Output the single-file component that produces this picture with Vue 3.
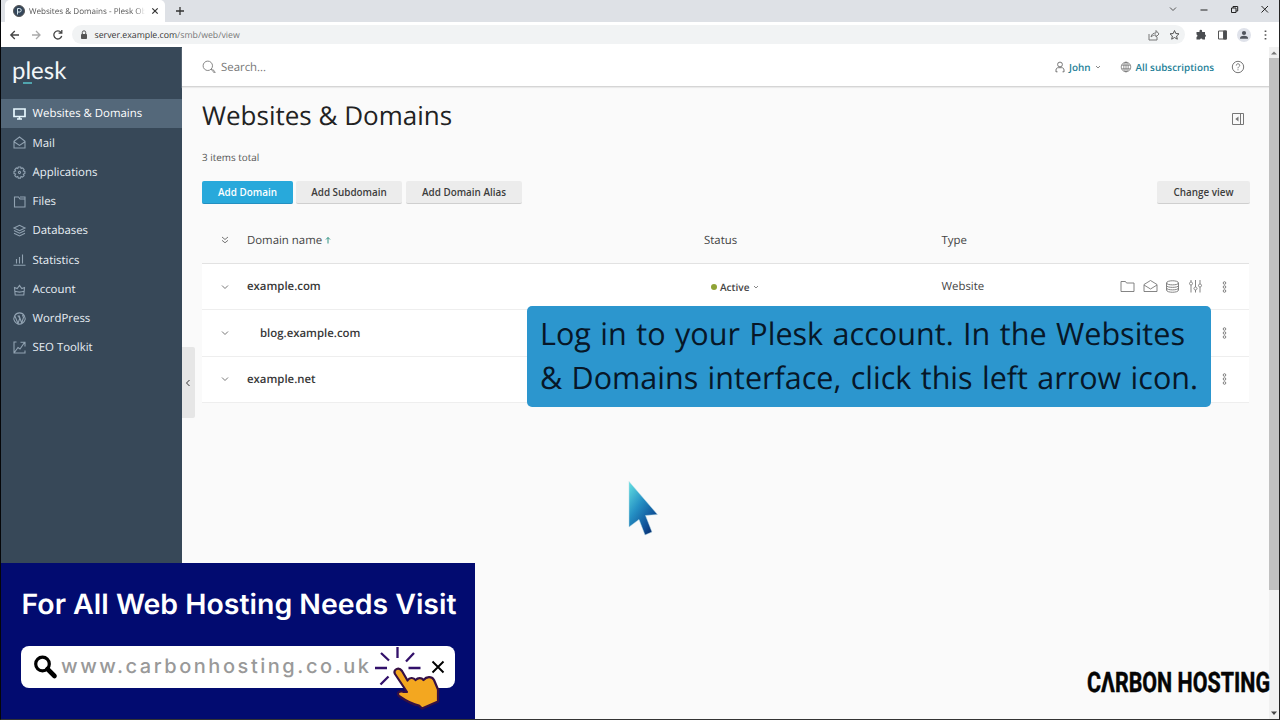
<script setup>
const nav = [
  { label: 'Websites & Domains', d: 'M1 2h11v7.5H1zM4 12h5M6.5 9.5V12', active: true },
  { label: 'Mail', d: 'M1 5.2 6.5 1 12 5.2V12H1zM1 5.8l5.5 3.6L12 5.8' },
  { label: 'Applications', d: 'M5.3 1h2.4l.4 1.5 1.6-.5 1.4 1.6-.8 1.3 1.6.6v2l-1.6.7.8 1.4-1.6 1.5-1.5-.6-.5 1.6H5.3l-.5-1.6-1.5.6-1.5-1.5.8-1.5L1 7.5v-2l1.6-.6-.8-1.3L3.3 2l1.5.5zM6.5 5.4a1.1 1.1 0 1 0 .01 0z' },
  { label: 'Files', d: 'M1.5 2h4l1.5 2h5v8H1.5zM7 2h5v2' },
  { label: 'Databases', d: 'M1 4 6.5 1.3 12 4 6.5 6.7zM1 6.5l5.5 2.7L12 6.5M1 9.2l5.5 2.7L12 9.2' },
  { label: 'Statistics', d: 'M.5 12.2h12M3.5 10.500V6M6.500 10.500V4M9.500 10.500V1.500' },
  { label: 'Account', d: 'M1.500 4.500 4.200 5.500 6.500 2.500l2.300 3 2.700-1-.700 7.500H2.200zM1.800 8.300c3 1 6.500 1 9.400 0' },
  { label: 'WordPress', d: 'M6.500.900a5.600 5.600 0 1 0 .01 0zM2 4.200l3 7.300 1.700-5L5.500 4M4.500 4h2.200M6.200 4l2.500 7L10.500 5.500 9.500 3' },
  { label: 'SEO Toolkit', d: 'M3.500 1H1v11h11V9.500M1 12l4-5.500L7 8l4.500-6.500M7.500 1.300H12V5.500' },
]
const rows = [
  { name: 'example.com', full: true },
  { name: 'blog.example.com', sub: true },
  { name: 'example.net' },
]
const tools = [
  'M1 2.500h4.500L6.500 4H14v8.500H1z',
  'M1 5.500 7.500 1.500 14 5.500v7H1zM1 6l6.500 4L14 6',
  'M1.500 4c0-3 12-3 12 0v7c0 3-12 3-12 0zM1.500 4c0 2.500 12 2.500 12 0M1.500 6.500c0 2.500 12 2.500 12 0M1.500 9c0 2.500 12 2.500 12 0',
  'M3 1v2M3 6v7.500M7.500 1v7M7.500 11v2.500M12 1v4M12 8v5.500M3 3a1.500 1.500 0 1 0 .01 0zM7.500 8a1.500 1.500 0 1 0 .01 0zM12 5a1.500 1.500 0 1 0 .01 0z',
]
</script>

<template>
  <div class="screen">
    <header class="tabs">
      <div class="tab">
        <svg class="fav" viewBox="0 0 12 12"><circle cx="6" cy="6" r="5.500" fill="#34465a" /><path d="M4.500 9.500v-6h2a1.700 1.700 0 0 1 0 3.500h-2" fill="none" stroke="#d5e6ee" /></svg>
        <span class="tabtitle">Websites &amp; Domains - Plesk Obs</span>
        <svg class="x" viewBox="0 0 8 8"><path d="m1.300 1.300 5.400 5.400M6.700 1.300 1.300 6.700" /></svg>
      </div>
      <svg class="plus" viewBox="0 0 10 10"><path d="M5 1v8M1 5h8" /></svg>
      <svg class="wincontrols" viewBox="0 0 106 14">
        <path d="m4 5.500 3 3 3-3" />
        <path d="M34.500 8h7" stroke="#222" />
        <path d="M65.500 6h4.500v4.500h-4.500zM67 6V4.500h4.700V9H70" stroke="#222" />
        <path d="m95.500 4 6.500 6.500M102 4l-6.500 6.500" stroke="#222" />
      </svg>
    </header>
    <div class="toolbar">
      <svg class="navigate" viewBox="0 0 56 14">
        <path d="M10 7H2M5.800 3 1.800 7l4 4" />
        <path d="M23 7h8M27 3l4 4-4 4" stroke="#aaa" />
        <path d="M52 4.500A4 4 0 1 0 52.700 8M52.800 2v3.200h-3.200" />
      </svg>
      <div class="url">
        <svg class="lock" viewBox="0 0 8 10"><path d="M1.500 4.500h5v4h-5z" fill="#555" stroke="#555" /><path d="M2.300 4V2.500a1.700 1.700 0 0 1 3.400 0V4" /></svg>
        <span class="host">server.example.com<i>/smb/web/view</i></span>
        <svg class="urlicons" viewBox="0 0 36 14">
          <path d="M2 6v6h8V9M4 9c.5-3 2.500-4 5-4V2.500L12 6 9 9V7C7 7 5.500 7.500 4 9z" stroke="#777" />
          <path d="m27.500 2.500 1.300 3 3.200.300-2.400 2.200.700 3.200-2.800-1.700-2.800 1.700.700-3.200L23 5.800l3.200-.300z" />
        </svg>
      </div>
      <svg class="ext" viewBox="0 0 84 14">
        <path d="M5.500 4V3a1.300 1.300 0 0 1 2.600 0v1H11v2.500a1.300 1.300 0 0 1 0 2.500v2.500H8.500a1.300 1.300 0 0 0-2.500 0H2.500V9a1.300 1.300 0 0 0 0-2.500V4z" fill="#4a4d51" stroke="none" />
        <path d="M24.500 3h8v8h-8z" /><path d="M29.500 3h3v8h-3z" fill="#4a4d51" />
        <g stroke="none"><circle cx="50" cy="7" r="7" fill="#dfe2ea" /><circle cx="50" cy="5" r="2.100" fill="#50545d" /><path d="M46 10.800V9.800c0-2.800 8-2.800 8 0v1z" fill="#50545d" /></g>
        <path d="M71.500 2.500v1.600M71.500 6.200v1.600M71.500 9.900v1.600" stroke-width="1.700" />
      </svg>
    </div>

    <div class="body">
      <aside class="side">
        <div class="logo"><span>plesk</span></div>
        <nav>
          <a v-for="n in nav" :key="n.label" :class="{ active: n.active }">
            <svg viewBox="0 0 13 13"><path :d="n.d" /></svg><span>{{ n.label }}</span>
          </a>
        </nav>
      </aside>

      <div class="content">
        <div class="topbar">
          <svg class="search" viewBox="0 0 14 14"><circle cx="5.800" cy="5.800" r="4.700" /><path d="m9 9 1 1M10 10.200l.700-.700 2.600 2.500-.900 1z" /></svg>
          <span class="ph">Search...</span>
          <svg class="user" viewBox="0 0 10 12"><circle cx="5" cy="3.500" r="2.400" /><path d="M1 11V9c0-1.500 1-2.300 2.200-2.300h3.600C8 6.700 9 7.500 9 9v2M1 10.800h1.500M7.500 10.800H9" /></svg>
          <b class="john">John</b>
          <svg class="caret" viewBox="0 0 6 6"><path d="m1 2 2 2 2-2" /></svg>
          <svg class="globe" viewBox="0 0 12 12"><circle cx="6" cy="6" r="4.800" /><ellipse cx="6" cy="6" rx="2.200" ry="4.800" /><path d="M6 1v10M1.700 4.200h8.600M1.700 7.800h8.600" /></svg>
          <b class="subs">All subscriptions</b>
          <svg class="help" viewBox="0 0 14 14"><circle cx="7" cy="7" r="5.700" /><path d="M5.300 5.500c0-2.400 3.500-2.200 3.400 0C8.600 6.700 7 6.700 7 8.300M7 9.300v1" /></svg>
        </div>
        <main>
          <div class="heading">
            <h1>Websites &amp; Domains</h1>
            <svg viewBox="0 0 12 12"><path d="M.500.500h11v11H.500zM8.500.500v11" /><path d="M6.500 3.500v5L3.300 6z" fill="#777" stroke="none" /></svg>
          </div>
          <p class="total">3 items total</p>
          <div class="buttons">
            <button class="primary">Add Domain</button>
            <button class="sub">Add Subdomain</button>
            <button class="alias">Add Domain Alias</button>
            <button class="view">Change view</button>
          </div>
          <div class="table">
            <div class="row head">
              <svg class="chev" viewBox="0 0 8 8"><path d="m1 1 3 2.500L7 1M1 4.300l3 2.500 3-2.500" /></svg>
              <span class="cell">Domain name <svg class="up" viewBox="0 0 6 8"><path d="M3 7.500V1.500M1 3.500l2-2 2 2" /></svg></span>
              <span class="cell">Status</span><span class="cell">Type</span>
            </div>
            <div v-for="r in rows" :key="r.name" class="row">
              <svg class="chev" viewBox="0 0 8 8"><path d="m1 2.500 3 3 3-3" /></svg>
              <b class="cell" :class="{ child: r.sub }">{{ r.name }}</b>
              <span class="status"><template v-if="r.full"><i class="dot"></i>Active<svg class="caret" viewBox="0 0 6 6"><path d="m1 2 2 2 2-2" /></svg></template></span>
              <span class="cell">{{ r.full ? 'Website' : '' }}</span>
              <span class="tools"><template v-if="r.full"><svg v-for="t in tools" :key="t" viewBox="0 0 15 15"><path :d="t" /></svg></template></span>
              <svg class="more" viewBox="0 0 5 12"><circle cx="2.500" cy="2" r="1.300" /><circle cx="2.500" cy="6" r="1.300" /><circle cx="2.500" cy="10" r="1.300" /></svg>
            </div>
          </div>
        </main>
      </div>
      <div class="scroll"><svg viewBox="0 0 10 10"><path d="m2 7 3-3 3 3z" /></svg><div class="thumb"></div><svg class="down" viewBox="0 0 10 10"><path d="m2 3 3 3.500L8 3z" /></svg></div>
    </div>

    <div class="handle"><svg viewBox="0 0 6 8"><path d="M4.500 1 1.500 4l3 3" /></svg></div>

    <div class="callout">
      <svg viewBox="0 0 684 101">
        <text x="13" y="38.500" textLength="645" lengthAdjust="spacingAndGlyphs">Log in to your Plesk account. In the Websites</text>
        <text x="13" y="82.500" textLength="658" lengthAdjust="spacingAndGlyphs">&amp; Domains interface, click this left arrow icon.</text>
      </svg>
    </div>

    <svg class="cursor" viewBox="0 0 36 60">
      <defs><linearGradient id="cg" x1="0" y1="0" x2="0.750" y2="1"><stop offset="0" stop-color="#64e2e2" /><stop offset=".45" stop-color="#2590c4" /><stop offset=".8" stop-color="#10549a" /><stop offset="1" stop-color="#082f70" /></linearGradient></defs>
      <path d="M4 1.500 32.500 34.500 20.500 35.500 27 52 20 55 14 39.500 4 47z" fill="url(#cg)" stroke="#b9dce6" stroke-width=".5" />
    </svg>

    <section class="promo">
      <svg class="promotitle" viewBox="0 0 474 60"><text x="20.500" y="31" textLength="435" lengthAdjust="spacingAndGlyphs">For All Web Hosting Needs Visit</text></svg>
      <div class="promobar">
        <svg viewBox="0 0 434 42">
          <circle cx="21.500" cy="18" r="6.800" fill="none" stroke="#000" stroke-width="3.200" /><path d="m26.500 23 7 7" stroke="#000" stroke-width="4.600" stroke-linecap="round" />
          <text x="40" y="27" textLength="308">www.carbonhosting.co.uk</text>
          <path d="m411.500 15.500 11 11M422.500 15.500l-11 11" stroke="#000" stroke-width="1.900" />
        </svg>
      </div>
      <svg class="hand" viewBox="0 0 86 70">
        <path d="M27.500 3v11M11 9l8 7.500M44 9l-8 8.500M5 24h12M38.500 24h12M18.500 32.500l-8 8" fill="none" stroke="#32106a" stroke-width="2.300" />
        <path d="M25 30c-2-4 3.500-8 7-3l5.500 9.500c2-3 6-3.500 8-.500 2.500-2.500 6-2.500 8 0 3-3.500 8-4 10.500 0l4 9.500v12L52 64.500 49 61.500c-7-1-13.500-5-20-9.500-3-3.500 1-5.500 5-4h3z" fill="#f3a720" stroke="#351044" stroke-width="2.200" stroke-linejoin="round" />
      </svg>
    </section>

    <svg class="brand" viewBox="0 0 190 30"><text x="6" y="19.700" transform="scale(1 1.167)" textLength="183" lengthAdjust="spacingAndGlyphs">C&#923;RBON HOSTING</text></svg>
  </div>
</template>

<style>
body { margin: 0; overflow: hidden; }
</style>
<style scoped>
* { box-sizing: border-box; }
svg { display: block; fill: none; stroke: #555; stroke-width: 1; flex: none; overflow: visible; }
svg text { stroke: none; }
.screen { position: relative; width: 1280px; height: 720px; overflow: hidden; border-left: 1px solid #050608; border-right: 1px solid #222; border-bottom: 1px solid #333; font: 11.400px/16px "Open Sans", "Noto Sans", sans-serif; text-rendering: geometricPrecision; color: #444; background: #fafafa; display: flex; flex-direction: column; }
.tabs { height: 22px; flex: none; background: #dee1e6; display: flex; align-items: center; padding-left: 4px; }
.tab { width: 160px; height: 22px; background: #fff; border-radius: 5px 5px 0 0; display: flex; align-items: center; padding-left: 8px; }
.fav { width: 12px; height: 12px; margin-right: 4px; }
.tabtitle { width: 116px; white-space: nowrap; font-size: 8.100px; padding-top: 1px; color: #555; -webkit-mask-image: linear-gradient(90deg, #000 92%, transparent); mask-image: linear-gradient(90deg, #000 92%, transparent); }
.x { width: 8px; height: 8px; margin-left: 6px; stroke: #333; stroke-width: 1.200; }
.plus { width: 10px; height: 10px; margin-left: 10px; stroke: #333; stroke-width: 1.300; }
.wincontrols { width: 106px; height: 14px; margin: -4px 7px 0 auto; }
.toolbar { height: 25px; flex: none; background: #fff; display: flex; align-items: center; padding-left: 8px; }
.navigate { width: 56px; height: 14px; stroke: #444; stroke-width: 1.300; }
.url { width: 1113px; height: 19px; border-radius: 10px; background: #f1f3f4; margin-left: 7px; display: flex; align-items: center; padding-left: 8px; }
.lock { width: 8px; height: 10px; margin-right: 6.500px; }
.host { font-size: 8.750px; color: #333; }
.host i { font-style: normal; color: #777; }
.urlicons { width: 36px; height: 14px; margin: 0 2px 0 auto; }
.ext { width: 84px; height: 14px; margin-left: 9px; }
.body { flex: 1; min-height: 0; display: flex; }
.side { width: 181px; flex: none; background: #374858; color: #e7eef4; font-weight: 500; }
.logo { height: 52px; padding: 9.500px 0 0 11px; font: 24px/28px Lato, sans-serif; color: #f2f6f8; position: relative; }
.logo::after { content: ""; position: absolute; left: 22px; top: 35px; width: 9px; height: 2px; background: #50a5ae; }
nav a { display: flex; align-items: center; height: 29.250px; padding: 0 0 0 12px; }
nav span { padding-top: 1.500px; }
nav svg { width: 13px; height: 13px; margin-right: 6.500px; stroke: #91a2b1; stroke-width: 1.100; }
nav .active { background: #54687a; color: #fff; }
nav .active svg { stroke: #e8f8ff; stroke-width: 1.700; }
.content { flex: 1; min-width: 0; display: flex; flex-direction: column; }
.topbar { height: 40px; flex: none; background: #fff; border-bottom: 1px solid #d5d5d5; box-shadow: 0 1px 1px #eaeaea; display: flex; align-items: center; padding: 0 24px 0 19.500px; }
.search { width: 14px; height: 14px; stroke: #888; }
.ph { margin: 0 auto 0 5.500px; padding-top: 2px; color: #777; }
.topbar b { font-size: 9.900px; font-weight: 600; color: #247f98; }
.user { width: 10px; height: 12px; margin-right: 4px; stroke: #777; }
.caret { width: 6px; height: 6px; margin-left: 4px; stroke: #888; }
.globe { width: 12px; height: 12px; margin: 0 4px 0 19px; stroke: #777; stroke-width: .800; }
.help { width: 14px; height: 14px; margin-left: 17px; stroke: #777; }
main { padding: 0 20px; }
.heading { display: flex; justify-content: space-between; align-items: center; padding: 12px 5px 0 0; height: 51px; }
.heading svg { width: 12px; height: 12px; stroke: #777; margin-top: 1px; }
h1 { margin: -7px 0 0; font-size: 26px; line-height: 34px; font-weight: 400; color: #222; }
.total { margin: 11px 0 16px; font-size: 9.900px; color: #555; }
.buttons { display: flex; height: 24px; }
button { height: 23px; padding: 0; border: 0; border-bottom: 1px solid #cfcfcf; border-radius: 2px; background: #ececec; font: 600 9.900px/21px "Open Sans", sans-serif; color: #3c3c3c; text-align: center; white-space: nowrap; margin-right: 4px; width: 106px; }
.primary { width: 91px; background: #28a9db; border-color: #238fc0; color: #fff; margin-right: 3px; }
.alias { width: 116px; }
.view { width: 93px; margin: 0 -1px 0 auto; }
.table { margin-top: 12px; }
.row { height: 46.300px; display: grid; grid-template-columns: 45px 457px 237.500px 178.500px 92px 1fr; align-items: center; background: #fff; border-bottom: 1px solid #eee; }
.head { height: 47px; background: #fafafa; border-bottom-color: #e2e2e2; }
.cell { padding-top: 1.500px; }
.chev { width: 8px; height: 8px; margin-left: 19px; stroke: #777; }
.up { display: inline-block; width: 6px; height: 8px; stroke: #329484; }
.row b { font-weight: 600; color: #383838; }
.row .child { padding-left: 13px; }
.status { display: flex; align-items: center; padding-left: 7px; font-size: 10px; font-weight: 600; }
.dot { width: 6px; height: 6px; border-radius: 50%; background: #8fa336; margin-right: 3px; }
.tools { display: flex; gap: 7.700px; }
.tools svg { width: 15px; height: 15px; stroke: #777; stroke-width: .900; }
.more { width: 5px; height: 12px; margin-left: 10px; stroke: #666; stroke-width: .800; }
.scroll { width: 10px; flex: none; background: #f1f1f1; display: flex; flex-direction: column; }
.scroll svg { width: 10px; height: 11px; fill: #777; stroke: none; }
.thumb { height: 532px; background: #c1c1c1; }
.scroll .down { margin-top: auto; fill: #444; }
.handle { position: absolute; left: 181px; top: 347px; width: 13px; height: 71px; background: #e6e6e6; border-radius: 0 2px 2px 0; display: flex; align-items: center; padding-left: 3px; }
.handle svg { width: 6px; height: 8px; stroke: #333; }
.callout { position: absolute; left: 526px; top: 306px; width: 684px; height: 101px; border-radius: 5px; background: #2c96ce; }
.callout text { font: 31px "Open Sans", "Noto Sans", sans-serif; fill: #071728; word-spacing: 1.500px; }
.cursor { position: absolute; left: 624px; top: 480px; width: 36px; height: 60px; }
.promo { position: absolute; left: 0; top: 563px; width: 474px; height: 156px; background: #020b70; }
.promotitle { width: 474px; height: 60px; margin-top: 20px; }
.promotitle text { font: 600 28px Inter, sans-serif; fill: #fff; }
.promobar { margin: 2.500px 0 0 19.500px; width: 434px; height: 42.500px; border-radius: 8px; background: #fff; }
.promobar text { font: 500 20px Inter, sans-serif; fill: #999; }
.hand { position: absolute; left: 369px; top: 81px; width: 86px; height: 70px; }
.brand { position: absolute; left: 1080px; top: 669px; width: 190px; height: 30px; }
.brand text { font: 700 24px Roboto, sans-serif; fill: #050505; stroke: #050505; stroke-width: .4; }
</style>
